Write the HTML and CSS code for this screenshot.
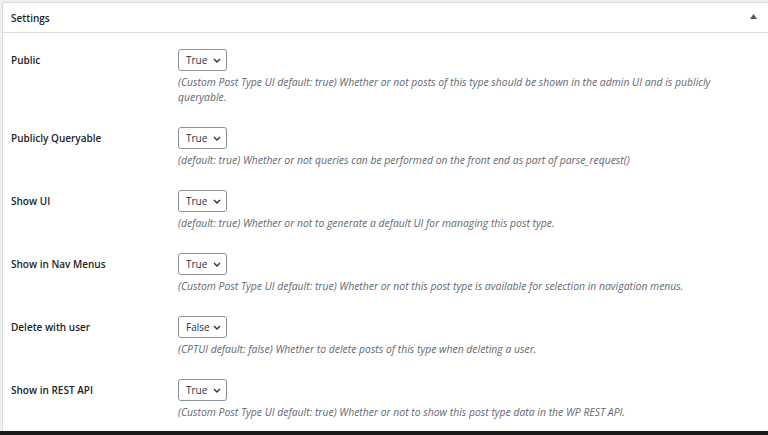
FILE: index.html
```html
<!DOCTYPE html>
<html lang="en">
<head>
<meta charset="utf-8">
<title>Settings</title>
<link rel="stylesheet" href="styles.css">
</head>
<body>
<div class="page">
  <section class="panel">
    <header class="panel-head">
      <h2 class="panel-title">Settings</h2>
      <span class="toggle" aria-hidden="true"><svg width="7" height="5" viewBox="0 0 7 5"><path d="M0 5 L3.5 0 L7 5 Z" fill="#50575e"/></svg></span>
    </header>
    <div class="rows">
      <div class="row">
        <div class="label">Public</div>
        <div class="field">
          <div class="select"><span>True</span><svg class="chev" width="8" height="5" viewBox="0 0 8 5"><path d="M1 1 L4 4 L7 1" fill="none" stroke="#2c3338" stroke-width="1.4"/></svg></div>
          <p class="desc">(Custom Post Type UI default: true) Whether or not posts of this type should be shown in the admin UI and is publicly<br>queryable.</p>
        </div>
      </div>
      <div class="row">
        <div class="label">Publicly Queryable</div>
        <div class="field">
          <div class="select"><span>True</span><svg class="chev" width="8" height="5" viewBox="0 0 8 5"><path d="M1 1 L4 4 L7 1" fill="none" stroke="#2c3338" stroke-width="1.4"/></svg></div>
          <p class="desc">(default: true) Whether or not queries can be performed on the front end as part of parse_request()</p>
        </div>
      </div>
      <div class="row">
        <div class="label">Show UI</div>
        <div class="field">
          <div class="select"><span>True</span><svg class="chev" width="8" height="5" viewBox="0 0 8 5"><path d="M1 1 L4 4 L7 1" fill="none" stroke="#2c3338" stroke-width="1.4"/></svg></div>
          <p class="desc">(default: true) Whether or not to generate a default UI for managing this post type.</p>
        </div>
      </div>
      <div class="row">
        <div class="label">Show in Nav Menus</div>
        <div class="field">
          <div class="select"><span>True</span><svg class="chev" width="8" height="5" viewBox="0 0 8 5"><path d="M1 1 L4 4 L7 1" fill="none" stroke="#2c3338" stroke-width="1.4"/></svg></div>
          <p class="desc">(Custom Post Type UI default: true) Whether or not this post type is available for selection in navigation menus.</p>
        </div>
      </div>
      <div class="row">
        <div class="label">Delete with user</div>
        <div class="field">
          <div class="select"><span>False</span><svg class="chev" width="8" height="5" viewBox="0 0 8 5"><path d="M1 1 L4 4 L7 1" fill="none" stroke="#2c3338" stroke-width="1.4"/></svg></div>
          <p class="desc">(CPTUI default: false) Whether to delete posts of this type when deleting a user.</p>
        </div>
      </div>
      <div class="row">
        <div class="label">Show in REST API</div>
        <div class="field">
          <div class="select"><span>True</span><svg class="chev" width="8" height="5" viewBox="0 0 8 5"><path d="M1 1 L4 4 L7 1" fill="none" stroke="#2c3338" stroke-width="1.4"/></svg></div>
          <p class="desc">(Custom Post Type UI default: true) Whether or not to show this post type data in the WP REST API.</p>
        </div>
      </div>
    </div>
  </section>
  <div class="bottom-bar"></div>
</div>
</body>
</html>
```

FILE: styles.css
```css
* { box-sizing: border-box; }
html, body { margin: 0; padding: 0; }
body {
  background: #f0f0f1;
  font-family: "Open Sans", "Noto Sans", Arial, sans-serif;
  color: #1d2327;
  overflow: hidden;
}
.page {
  height: 435px;
  display: flex;
  flex-direction: column;
  padding: 2px 0 0 2px;
}
.panel {
  flex: 1;
  overflow: hidden;
  background: #fff;
  border: 1px solid #dcdcde;
  border-bottom: none;
  margin-right: -10px;
}
.panel-head {
  height: 30px;
  display: flex;
  align-items: center;
  justify-content: space-between;
  padding: 0 0 0 8px;
  border-bottom: 1px solid #dcdcde;
}
.panel-title {
  margin: 0;
  font-size: 10px;
  font-weight: 600;
  color: #1d2327;
}
.toggle {
  display: flex;
  margin-right: 20px;
  padding-bottom: 2px;
}
.rows {
  padding-top: 5px;
}
.row {
  display: flex;
  padding: 11px 0;
}
.label {
  width: 175px;
  padding-left: 8px;
  font-size: 10px;
  font-weight: 600;
  line-height: 22px;
  color: #1d2327;
}
.field {
  display: flex;
  flex-direction: column;
  align-items: flex-start;
}
.select {
  width: 49px;
  height: 22px;
  border: 1px solid #8c8f94;
  border-radius: 3px;
  display: flex;
  align-items: center;
  padding: 0 5px 0 7px;
  font-size: 10px;
  color: #2c3338;
}
.chev { display: block; margin-left: auto; }
.desc {
  margin: 4px 0 0;
  font-size: 10.4px;
  font-style: italic;
  line-height: 15px;
  color: #646970;
}
.bottom-bar {
  height: 4px;
  background: #1a1a1a;
  margin-left: -2px;
}
```
